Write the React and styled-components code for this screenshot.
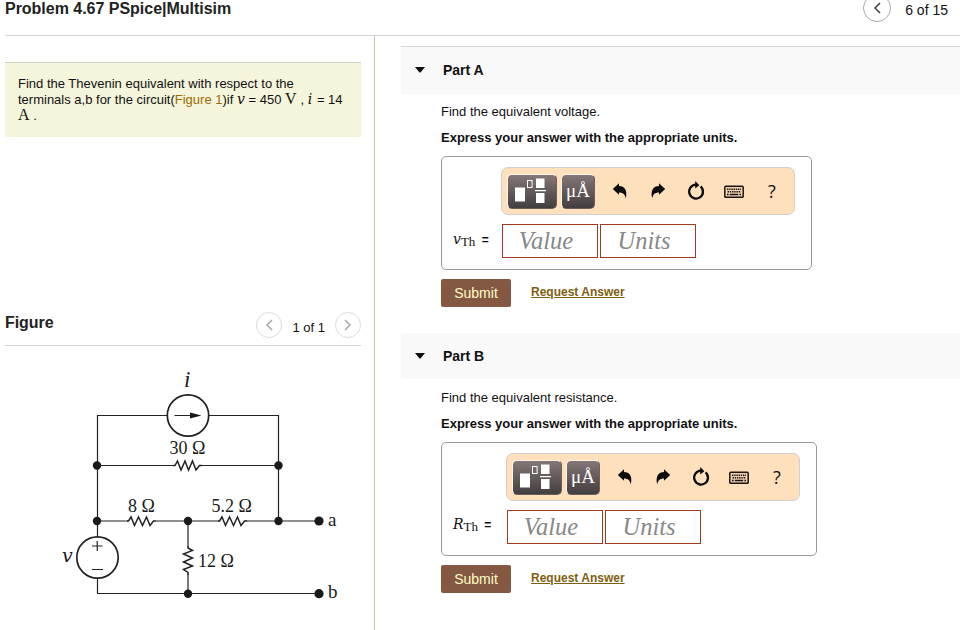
import React from 'react';
import styled, { createGlobalStyle } from 'styled-components';

const GlobalStyle = createGlobalStyle`
  * {
    box-sizing: border-box;
  }
  body {
    margin: 0;
    background-color: #fff;
    color: #111;
    font-family: "Liberation Sans", Arial, sans-serif;
    font-size: 13px;
    overflow: hidden;
  }
`;

const Page = styled.div`
  display: flex;
  flex-direction: column;
  width: 960px;
  height: 630px;
  overflow: hidden;
`;

const Header = styled.header`
  display: flex;
  justify-content: space-between;
  flex: none;
  height: 36px;
  margin-left: 5px;
  padding-right: 12px;
  border-bottom: 1px solid #d3d5d3;
`;

const Title = styled.h1`
  margin: 0;
  font-size: 16px;
  line-height: 18px;
  letter-spacing: -0.02px;
  color: #222;
`;

const Pager = styled.div`
  display: flex;
  align-items: center;
  font-size: 14px;
  line-height: 16px;
`;

const HeaderPager = styled(Pager)`
  gap: 14px;
  height: 36px;
  margin-top: -10px;
  color: #111;

  span {
    padding-top: 3px;
  }
`;

const RoundButton = styled.button`
  display: flex;
  align-items: center;
  justify-content: center;
  width: ${({ $size }) => $size}px;
  height: ${({ $size }) => $size}px;
  padding: 0;
  border: 1px solid ${({ $muted }) => ($muted ? '#dcdcdc' : '#aaa')};
  border-radius: 50%;
  background-color: #fff;
  color: ${({ $muted }) => ($muted ? '#aaa' : '#444')};
`;

const Columns = styled.div`
  display: flex;
  flex: 1;
  min-height: 0;
`;

const LeftColumn = styled.aside`
  display: flex;
  flex-direction: column;
  flex: none;
  width: 375px;
  padding: 26px 13px 0 5px;
  border-right: 1px solid #cfc0ae;
`;

const Problem = styled.section`
  height: 75px;
  padding: 13px 0 0 13px;
  border-top: 1px solid #d0d3c4;
  background-color: #f5f5dc;
  font-size: 13px;
  line-height: 16px;
  white-space: nowrap;
`;

const FigureLink = styled.a`
  color: #a06a00;
`;

const Math = styled.span`
  margin-right: ${({ $after }) => $after || 0}px;
  font-family: ${({ $italic }) => ($italic ? '"DejaVu Serif", ' : '')}"Liberation Serif", serif;
  font-size: ${({ $italic }) => ($italic ? 14 : 16)}px;
  line-height: 10px;
  font-style: ${({ $italic }) => ($italic ? 'italic' : 'normal')};
`;

const FigureHeader = styled.div`
  display: flex;
  justify-content: space-between;
  height: 37px;
  margin-top: 172px;
  border-bottom: 1px solid #d3d3d3;
`;

const FigureTitle = styled.h2`
  margin: 5px 0 0;
  font-size: 16px;
  line-height: 18px;
  letter-spacing: -0.05px;
  color: #222;
`;

const FigurePager = styled(Pager)`
  gap: 10px;
  height: 32px;
  font-size: 13px;

  span {
    padding-top: 5px;
  }
`;

const Circuit = styled.svg`
  flex: none;
  width: 356px;
  height: 284px;

  text {
    font-family: "Liberation Serif", serif;
    font-size: 18px;
    fill: #1a1a1a;
  }
`;

const RightColumn = styled.main`
  display: flex;
  flex-direction: column;
  flex: 1;
  padding: 10px 0 0 26px;
`;

const PartHeader = styled.div`
  display: flex;
  align-items: center;
  gap: 18px;
  height: ${({ $ruled }) => ($ruled ? 48 : 46)}px;
  padding: 0 0 ${({ $ruled }) => ($ruled ? 1 : 0)}px 14px;
  border-top: ${({ $ruled }) => ($ruled ? '1px solid #d6d6d6' : 'none')};
  background-color: #f9f9f9;
  font-size: 14px;
  font-weight: bold;
`;

const PartBody = styled.div`
  height: 239px;
  padding: ${({ $top }) => $top}px 0 0 40px;
`;

const Prompt = styled.p`
  margin: 0 0 10px;
  line-height: 16px;
`;

const Instruction = styled(Prompt)`
  font-weight: bold;
  letter-spacing: -0.01px;
`;

const AnswerBox = styled.div`
  display: grid;
  grid-template-columns: ${({ $label }) => $label}px 294px;
  grid-template-rows: 48px 34px;
  row-gap: 9px;
  width: ${({ $label }) => $label + 323}px;
  height: 114px;
  padding: 10px 0 0 11px;
  border: 1px solid #999;
  border-radius: 5px;
`;

const Toolbar = styled.div`
  display: flex;
  align-items: center;
  grid-column: 2;
  padding-left: 5px;
  border: 1px solid #d2cec9;
  border-radius: 7px;
  background-color: #ffe0bd;
`;

const ToolButton = styled.button`
  display: flex;
  align-items: center;
  justify-content: center;
  width: ${({ $width }) => $width}px;
  height: 35px;
  margin-right: ${({ $after }) => $after}px;
  padding: 0;
  border: 1px solid #fff6ea;
  border-right-color: #6b5f5d;
  border-bottom-color: #6b5f5d;
  border-radius: 5px;
  background: linear-gradient(#857777, #423e3f);
  color: #fff;
  font-family: "Liberation Serif", serif;
  font-size: 19px;
  line-height: 20px;
`;

const ToolIcon = styled.button`
  display: flex;
  align-items: center;
  justify-content: center;
  width: 38px;
  height: 35px;
  padding: 0;
  border: none;
  background: none;
  color: #111;
  font-family: "Open Sans", sans-serif;
  font-size: 18px;
`;

const Quantity = styled.div`
  grid-column: 1;
  align-self: center;
  padding-bottom: ${({ $lift }) => $lift}px;
  font-size: 12px;
  font-weight: bold;
  white-space: nowrap;

  i {
    font-family: "DejaVu Serif", "Liberation Serif", serif;
    font-size: 14px;
    font-weight: normal;
    line-height: 16px;
  }

  sub {
    margin-right: 3px;
    font-family: "Liberation Serif", serif;
    font-size: 13px;
    font-weight: normal;
    line-height: 0;
    vertical-align: -2px;
  }
`;

const Fields = styled.div`
  display: flex;
  gap: 2px;
  padding-left: 1px;
`;

const Field = styled.input`
  width: 96px;
  height: 34px;
  padding: 0 8px 1px 0;
  border: 1px solid #a5391f;
  border-radius: 0;
  background-color: #fff;
  font-family: "Liberation Serif", serif;
  font-size: 24.5px;
  font-style: italic;
  text-align: center;

  &::placeholder {
    color: #888;
    opacity: 1;
  }
`;

const Actions = styled.div`
  display: flex;
  gap: 20px;
  margin-top: 9px;
`;

const Submit = styled.button`
  width: 70px;
  height: 28px;
  padding: 0;
  border: none;
  border-radius: 2px;
  background-color: #855843;
  color: #ffffc4;
  font-family: inherit;
  font-size: 14px;
`;

const RequestLink = styled.a`
  margin-top: 5px;
  color: #80600f;
  font-size: 12px;
  line-height: 16px;
  font-weight: bold;
  text-decoration: underline;
`;

const Chevron = ({ right }) => (
  <svg width="8" height="12" viewBox="0 0 8 12" fill="none" stroke="currentColor" strokeWidth="1.6">
    <path d={right ? 'M1 1L6 6L1 11' : 'M7 1L2 6L7 11'} />
  </svg>
);

const Caret = () => (
  <svg width="10" height="6" viewBox="0 0 10 6">
    <path d="M0 0H10L5.5 5.6H4.5Z" fill="#111" />
  </svg>
);

const TemplateIcon = () => (
  <svg width="48" height="33" viewBox="0 0 48 33">
    <path d="M7 12.5H17V26.5H7ZM28 3.5H36.5V13H28ZM28 18H36.5V28H28ZM27 15H38V16.2H27Z" fill="#fff" />
    <rect x="19.5" y="5.5" width="4.6" height="7" fill="none" stroke="#fff" strokeWidth="1" />
  </svg>
);

const UndoIcon = ({ flip }) => (
  <svg width="16" height="16" viewBox="0 0 16 16">
    <path
      transform={flip ? 'translate(16 0) scale(-1 1)' : undefined}
      d="M0.8 6L7 0.3V3C12.5 3 15.8 7.5 13.8 15.4C13.2 11.4 11 9.4 7 9.4V11.8Z"
      fill="#0c0c0c"
    />
  </svg>
);

const ResetIcon = () => (
  <svg width="18" height="20" viewBox="0 0 18 20">
    <path d="M13.6 5.4A6.9 6.9 0 1 1 8.8 3.7" fill="none" stroke="#0c0c0c" strokeWidth="2.3" />
    <path d="M8.2 0L12.4 4.2L8.2 7.6Z" fill="#0c0c0c" />
  </svg>
);

const KeyboardIcon = () => (
  <svg width="20" height="14" viewBox="0 0 20 14">
    <rect x="0.8" y="2.3" width="18.4" height="11" rx="1" fill="#f0cfae" stroke="#1b1511" strokeWidth="1.5" />
    <path d="M3 5.2H17M3.6 7.7H17" stroke="#1b1511" strokeWidth="1.5" strokeDasharray="1.4 0.8" />
    <path d="M3 10.5H4.6M5.8 10.5H14.2M15.4 10.5H17" stroke="#1b1511" strokeWidth="1.4" />
  </svg>
);

const CircuitDiagram = () => (
  <Circuit viewBox="5 346 356 284">
    <g fill="none" stroke="#222" strokeWidth="1.2">
      <path d="M167 415.5H97.5V537M208.5 415.5H278.5V521" />
      <path d="M97 465.5H173.5M201.5 465.5H278.5" />
      <path d="M97 521H128M156 521H219M246 521H319" />
      <path d="M97.5 578V593.5H319M188 521V546.5M188 574V593.5" />
      <g strokeWidth="1.5" strokeLinejoin="miter">
        <path d="M173 465.5H175L177.5 461L181 470L185 461L188.5 470L192.5 461L196 470L199.5 465.5H202" />
        <path d="M127 521H128.5L131 517L134.5 525.5L138.5 517L142.5 525.5L146.5 517L150 525.5L153.5 521H156" />
        <path d="M218 521H219.5L222 517L225.5 525.5L229.5 517L233.5 525.5L237.5 517L241 525.5L244.5 521H247" />
        <path d="M188 546V548L192.5 550.5L183.5 554L192.5 558L183.5 562L192.5 566L183.5 569.5L188 572.5V575" />
      </g>
      <g strokeWidth="1.7">
        <circle cx="188" cy="415.5" r="20.7" />
        <circle cx="97.5" cy="557.5" r="20.7" />
      </g>
      <path d="M174.5 415.5H194M92 546H102.5M97.25 541V551M92 569.5H103" />
    </g>
    <g fill="#1a1a1a">
      <path d="M190 412.5L201.5 415.5L190 418.5Z" />
      <circle cx="97" cy="465.5" r="4.2" />
      <circle cx="278.5" cy="465.5" r="4.2" />
      <circle cx="97" cy="521" r="4.2" />
      <circle cx="188" cy="521" r="4.2" />
      <circle cx="278.5" cy="521" r="4.2" />
      <circle cx="319" cy="521" r="4.6" />
      <circle cx="188" cy="593.7" r="4.2" />
      <circle cx="319" cy="593.7" r="4.6" />
    </g>
    <text x="184" y="387" fontStyle="italic" style={{ fontSize: 23 }}>i</text>
    <text x="169.5" y="454">30 Ω</text>
    <text x="128" y="512">8 Ω</text>
    <text x="211.5" y="512">5.2 Ω</text>
    <text x="198" y="567">12 Ω</text>
    <text x="328" y="526" style={{ fontSize: 19 }}>a</text>
    <text x="328" y="598" style={{ fontSize: 19 }}>b</text>
    <text x="62" y="562" fontStyle="italic" style={{ fontFamily: 'DejaVu Serif', fontSize: 19 }}>v</text>
  </Circuit>
);

const Part = ({ name, prompt, symbol, labelWidth, ruled }) => (
  <>
    <PartHeader $ruled={ruled}>
      <Caret />
      {name}
    </PartHeader>
    <PartBody $top={ruled ? 10 : 11}>
      <Prompt>{prompt}</Prompt>
      <Instruction>Express your answer with the appropriate units.</Instruction>
      <AnswerBox $label={labelWidth}>
        <Toolbar>
          <ToolButton $width={50} $after={4}><TemplateIcon /></ToolButton>
          <ToolButton $width={34} $after={6}>μÅ</ToolButton>
          <ToolIcon><UndoIcon /></ToolIcon>
          <ToolIcon><UndoIcon flip /></ToolIcon>
          <ToolIcon><ResetIcon /></ToolIcon>
          <ToolIcon><KeyboardIcon /></ToolIcon>
          <ToolIcon>?</ToolIcon>
        </Toolbar>
        <Quantity $lift={ruled ? 4 : 6}><i>{symbol}</i><sub>Th</sub> =</Quantity>
        <Fields>
          <Field placeholder="Value" />
          <Field placeholder="Units" />
        </Fields>
      </AnswerBox>
      <Actions>
        <Submit>Submit</Submit>
        <RequestLink>Request Answer</RequestLink>
      </Actions>
    </PartBody>
  </>
);

export default function App() {
  return (
    <Page>
      <GlobalStyle />
      <Header>
        <Title>Problem 4.67 PSpice|Multisim</Title>
        <HeaderPager>
          <RoundButton $size={28}><Chevron /></RoundButton>
          <span>6 of 15</span>
        </HeaderPager>
      </Header>
      <Columns>
        <LeftColumn>
          <Problem>
            Find the Thevenin equivalent with respect to the<br />
            terminals a,b for the circuit(<FigureLink>Figure 1</FigureLink>)if{' '}
            <Math $italic>v</Math> = 450 <Math $after={4}>V</Math>,{' '}
            <Math $italic $after={1}>i</Math> = 14<br />
            <Math>A</Math> .
          </Problem>
          <FigureHeader>
            <FigureTitle>Figure</FigureTitle>
            <FigurePager>
              <RoundButton $size={26} $muted><Chevron /></RoundButton>
              <span>1 of 1</span>
              <RoundButton $size={26} $muted><Chevron right /></RoundButton>
            </FigurePager>
          </FigureHeader>
          <CircuitDiagram />
        </LeftColumn>
        <RightColumn>
          <Part name="Part A" prompt="Find the equivalent voltage." symbol="v" labelWidth={48} ruled />
          <Part name="Part B" prompt="Find the equivalent resistance." symbol="R" labelWidth={53} />
        </RightColumn>
      </Columns>
    </Page>
  );
}
